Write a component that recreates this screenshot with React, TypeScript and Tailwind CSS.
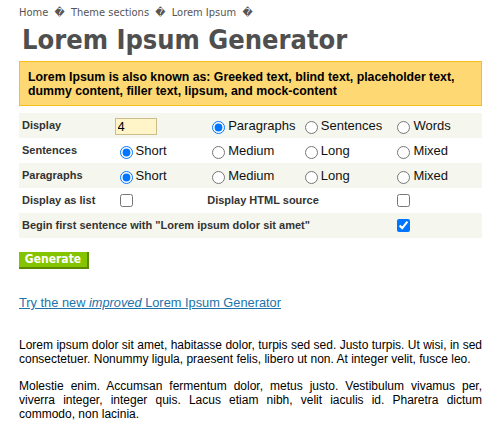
const tahoma = { fontFamily: '"DejaVu Sans Condensed", "DejaVu Sans", Tahoma, sans-serif', fontStretch: 'condensed' as const }

function Radio({ name, label, checked }: { name: string; label: string; checked?: boolean }) {
  return (
    <label className="flex items-center text-[13px] text-[#111]">
      <input type="radio" name={name} defaultChecked={checked} className="ml-[5px] mr-[3px] mt-[3px] w-[13px] h-[13px]" />
      <span>{label}</span>
    </label>
  )
}

function Row({ shade, children }: { shade?: boolean; children: React.ReactNode }) {
  return (
    <div className={`grid grid-cols-5 h-[25px] items-center ${shade ? 'bg-[#f5f7ee]' : 'bg-white'}`}>
      {children}
    </div>
  )
}

const labelCls = 'px-[3px] text-[11px] font-bold text-[#333]'

export default function App() {
  return (
    <div className="w-[501px] h-[424px] overflow-hidden bg-white px-[19px] pt-[6px]"
      style={{ fontFamily: '"Liberation Sans", Arial, sans-serif' }}>
      <div className="text-[11px] leading-[13px] text-[#555]" style={tahoma}>
        Home &nbsp;{'\uFFFD'}&nbsp; Theme sections &nbsp;{'\uFFFD'}&nbsp; Lorem Ipsum &nbsp;{'\uFFFD'}
      </div>
      <h1 className="mt-[5px] ml-[3px] text-[27px] leading-[32px] font-bold text-[#4f4f4f]" style={tahoma}>
        Lorem Ipsum Generator
      </h1>
      <div className="mt-[5px] border border-[#f7bd1c] bg-[#fed873] px-[8px] pt-[8px] pb-[7px] text-[12.3px] leading-[14px] font-bold text-black">
        Lorem Ipsum is also known as: Greeked text, blind text, placeholder text, dummy content, filler text, lipsum, and mock-content
      </div>

      <div className="mt-[7px]">
        <Row shade>
          <div className={labelCls}>Display</div>
          <div className="px-[3px]">
            <input type="text" defaultValue="4"
              className="w-[42px] h-[17px] border border-[#cbbd8c] bg-[#fff5c9] px-[2px] text-[13px] leading-[15px] text-black outline-none" />
          </div>
          <div className="px-[3px]"><Radio name="what" label="Paragraphs" checked /></div>
          <div className="px-[3px]"><Radio name="what" label="Sentences" /></div>
          <div className="px-[3px]"><Radio name="what" label="Words" /></div>
        </Row>
        <Row>
          <div className={labelCls}>Sentences</div>
          <div className="px-[3px]"><Radio name="sent" label="Short" checked /></div>
          <div className="px-[3px]"><Radio name="sent" label="Medium" /></div>
          <div className="px-[3px]"><Radio name="sent" label="Long" /></div>
          <div className="px-[3px]"><Radio name="sent" label="Mixed" /></div>
        </Row>
        <Row shade>
          <div className={labelCls}>Paragraphs</div>
          <div className="px-[3px]"><Radio name="para" label="Short" checked /></div>
          <div className="px-[3px]"><Radio name="para" label="Medium" /></div>
          <div className="px-[3px]"><Radio name="para" label="Long" /></div>
          <div className="px-[3px]"><Radio name="para" label="Mixed" /></div>
        </Row>
        <Row>
          <div className={labelCls}>Display as list</div>
          <div className="px-[3px] flex"><input type="checkbox" className="ml-[5px] w-[13px] h-[13px]" /></div>
          <div className={`${labelCls} col-span-2`}>Display HTML source</div>
          <div className="px-[3px] flex"><input type="checkbox" className="ml-[5px] w-[13px] h-[13px]" /></div>
        </Row>
        <Row shade>
          <div className={`${labelCls} col-span-4`}>Begin first sentence with "Lorem ipsum dolor sit amet"</div>
          <div className="px-[3px] flex"><input type="checkbox" defaultChecked className="ml-[5px] w-[13px] h-[13px]" /></div>
        </Row>
      </div>

      <button className="mt-[14px] block h-[17px] w-[70px] bg-[#84c400] border-r-2 border-b-2 border-[#5b8a00] text-[12px] leading-[15px] font-bold text-white"
        style={tahoma}>
        Generate
      </button>

      <a href="#" className="mt-[26px] block w-fit text-[12.8px] leading-[15px] text-[#2073aa] underline">
        Try the new <i>improved</i> Lorem Ipsum Generator
      </a>

      <div className="mt-[28px] text-[12px] leading-[14px] text-black text-justify">
        <p>Lorem ipsum dolor sit amet, habitasse dolor, turpis sed sed. Justo turpis. Ut wisi, in sed consectetuer. Nonummy ligula, praesent felis, libero ut non. At integer velit, fusce leo.</p>
        <p className="mt-[13px]">Molestie enim. Accumsan fermentum dolor, metus justo. Vestibulum vivamus per, viverra integer, integer quis. Lacus etiam nibh, velit iaculis id. Pharetra dictum commodo, non lacinia.</p>
      </div>
    </div>
  )
}
